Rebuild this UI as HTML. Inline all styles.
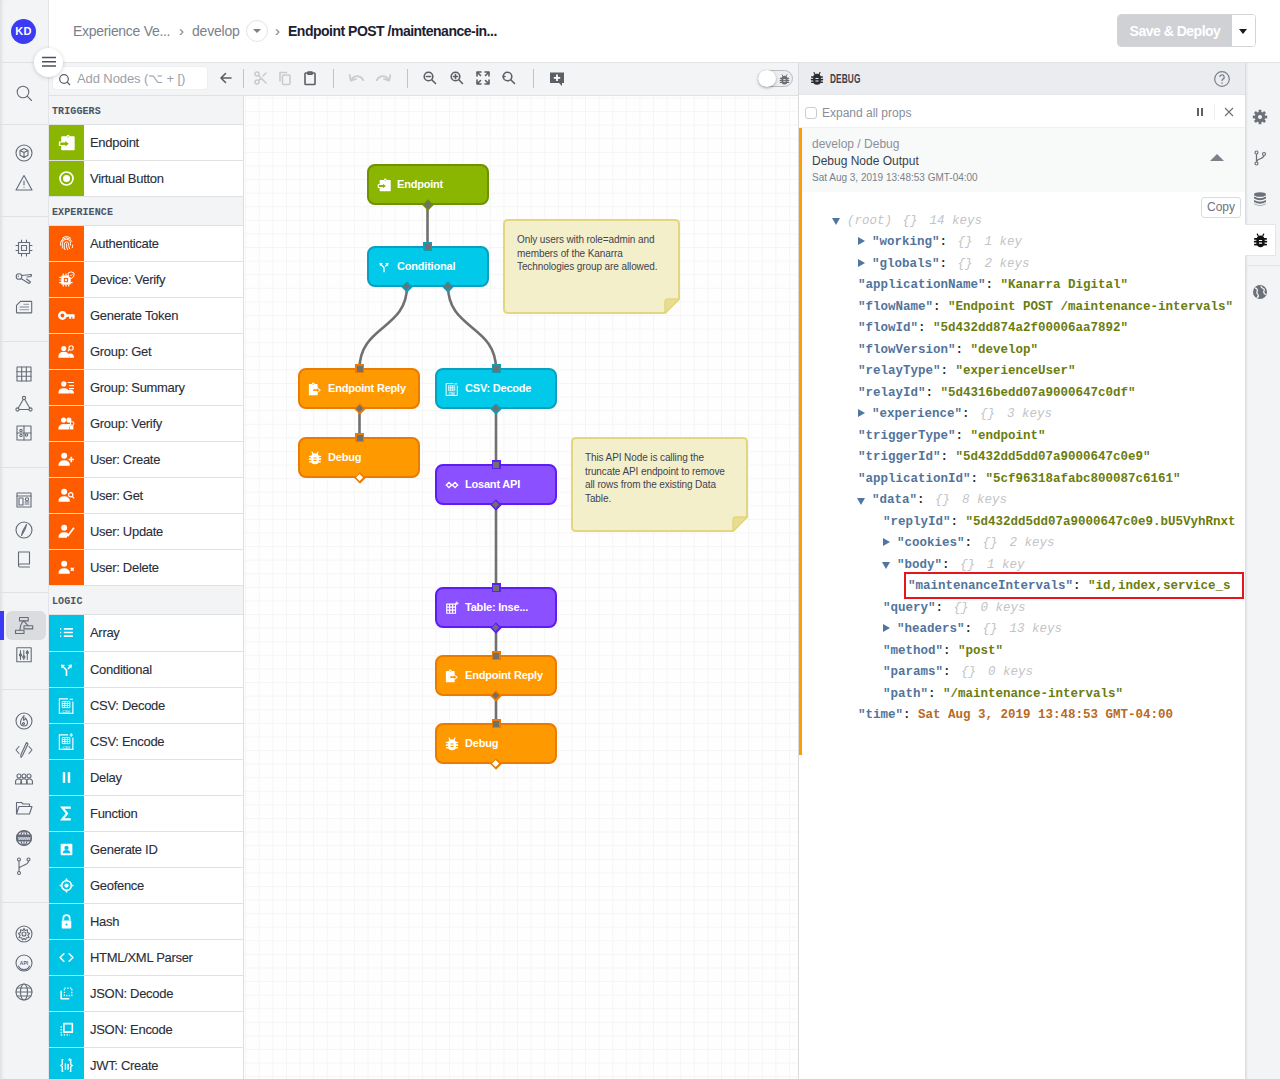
<!DOCTYPE html>
<html><head><meta charset="utf-8">
<style>
*{box-sizing:border-box;margin:0;padding:0}
html,body{width:1280px;height:1079px;overflow:hidden;background:#fff;font-family:"Liberation Sans",sans-serif;color:#2b2f3a}
.abs{position:absolute}
/* header */
#hdr{position:absolute;left:0;top:0;width:1280px;height:63px;background:#fff;border-bottom:1px solid #e1e3e6}
/* left sidebar */
#lsb{position:absolute;left:0;top:0;width:49px;height:1079px;background:#f3f4f6;border-right:1px solid #e3e5e8;box-shadow:inset 4px 0 4px -3px rgba(0,0,0,.12)}
.lsdiv{position:absolute;left:0;width:48px;height:1px;background:#e0e2e5}
.lsi{position:absolute;left:14px;width:20px;height:20px}
/* toolbar */
#tb{position:absolute;left:49px;top:63px;width:749px;height:33px;background:#f3f4f6;border-bottom:1px solid #dfe1e4}
/* palette */
#pal{position:absolute;left:49px;top:96px;width:195px;height:983px;background:#fff;border-right:1px solid #dcdee1;overflow:hidden}
.ph{height:29px;background:#f3f4f6;border-bottom:1px solid #dfe1e4;font-family:"Liberation Mono",monospace;font-weight:700;font-size:10px;color:#4c5363;padding:9.5px 0 0 3px;letter-spacing:0.1px}
.pi{height:36px;border-bottom:1px solid #dfe1e4;position:relative;background:#fff}
.pi .ic{position:absolute;left:0;top:0;width:35px;height:35px}
.pi .tx{position:absolute;left:41px;top:10px;font-size:13px;color:#2a2e3a;white-space:nowrap;letter-spacing:-0.3px;-webkit-text-stroke:0.1px #2a2e3a}
.g{background:#8ab500}.o{background:#ff5c00}.c{background:#00c4e6}
.pi svg{position:absolute;left:9px;top:9px;width:17px;height:17px}
/* canvas */
#cv{position:absolute;left:244px;top:96px;width:554px;height:983px;background-color:#fefefe;
background-image:linear-gradient(to right,#f5f5f5 1px,transparent 1px),linear-gradient(to bottom,#f5f5f5 1px,transparent 1px);
background-size:13.6px 13.6px;background-position:1.2px 1.5px;overflow:hidden}
/* debug panel */
#dbg{position:absolute;left:798px;top:63px;width:447px;height:1016px;background:#fff;border-left:1px solid #d9dbde}
#rsb{position:absolute;left:1245px;top:63px;width:35px;height:1016px;background:#f3f4f6;box-shadow:inset 3px 0 3px -2px rgba(0,0,0,.15)}
.node{position:absolute;width:122px;height:41px;border-radius:8px;border:2px solid;color:#fff;font-size:11px;font-weight:700}
.node .nt{position:absolute;left:28px;top:11.5px;white-space:nowrap}
.json{font-family:"Liberation Mono",monospace;font-size:12.5px;font-weight:700;white-space:pre;position:absolute;line-height:21.52px}
.k{color:#52749b}.s{color:#6a7d0e}.m{color:#c2c4c6;font-style:italic;font-weight:400}.t{color:#b86a1f}
</style></head><body>
<div id="hdr">
  
  <div class="abs" style="left:73px;top:23px;font-size:14px;color:#7a808c;letter-spacing:-0.3px;white-space:nowrap">Experience Ve...</div>
  <div class="abs" style="left:179px;top:22px;font-size:15px;color:#7a808c">&#8250;</div>
  <div class="abs" style="left:192px;top:23px;font-size:14px;color:#7a808c;letter-spacing:-0.2px">develop</div>
  <div class="abs" style="left:246px;top:20px;width:22px;height:22px;border-radius:50%;border:1px solid #e2e4e7;background:#fff"></div>
  <div class="abs" style="left:253px;top:29px;width:0;height:0;border-left:4px solid transparent;border-right:4px solid transparent;border-top:4px solid #7a808c"></div>
  <div class="abs" style="left:275px;top:22px;font-size:15px;color:#7a808c">&#8250;</div>
  <div class="abs" style="left:288px;top:23px;font-size:14px;font-weight:700;color:#1c2030;letter-spacing:-0.5px;white-space:nowrap">Endpoint POST /maintenance-in...</div>
  <div class="abs" style="left:1117px;top:14px;width:139px;height:33px;border-radius:4px;border:1px solid #d2d4d8;overflow:hidden">
    <div class="abs" style="left:0;top:0;width:114px;height:31px;background:#cfd1d5;color:#fff;font-size:14px;font-weight:700;line-height:33px;text-align:center;letter-spacing:-0.5px">Save &amp; Deploy</div>
    <div class="abs" style="left:114px;top:0;width:23px;height:31px;background:#fff"></div>
    <div class="abs" style="left:121px;top:14px;width:0;height:0;border-left:4.5px solid transparent;border-right:4.5px solid transparent;border-top:5px solid #1a1a1a"></div>
  </div>
</div>

<div id="lsb">
<div class="lsdiv" style="top:62px"></div>
<div class="lsdiv" style="top:124px"></div>
<div class="lsdiv" style="top:216px"></div>
<div class="lsdiv" style="top:341px"></div>
<div class="lsdiv" style="top:467px"></div>
<div class="lsdiv" style="top:592px"></div>
<div class="lsdiv" style="top:689px"></div>
<div class="lsdiv" style="top:902px"></div>
<div class="abs" style="left:5.5px;top:611px;width:40.5px;height:29px;border-radius:6px;background:#dadce0"></div>
<div class="abs" style="left:0;top:611px;width:4px;height:29px;background:#3b3bf5"></div>
<svg class="abs" style="left:13.5px;top:82.8px" width="20" height="20" viewBox="0 0 20 20"><circle cx="9" cy="9" r="5.8" stroke="#646a76" stroke-width="1.1" fill="none" stroke-linecap="round" stroke-linejoin="round"/><path d="M13.2 13.2 L17.5 17.5" stroke="#646a76" stroke-width="1.1" fill="none" stroke-linecap="round" stroke-linejoin="round"/></svg>
<svg class="abs" style="left:13.5px;top:142.8px" width="20" height="20" viewBox="0 0 20 20"><circle cx="10" cy="10" r="8" stroke="#646a76" stroke-width="1.1" fill="none" stroke-linecap="round" stroke-linejoin="round"/><path d="M10 5.5 L14 7.5 L14 12.2 L10 14.5 L6 12.2 L6 7.5 Z M6 7.5 L10 9.6 L14 7.5 M10 9.6 L10 14.5" stroke="#646a76" stroke-width="1.1" fill="none" stroke-linecap="round" stroke-linejoin="round"/></svg>
<svg class="abs" style="left:13.5px;top:172.8px" width="20" height="20" viewBox="0 0 20 20"><path d="M10 2.5 L18 17 L2 17 Z" stroke="#646a76" stroke-width="1.1" fill="none" stroke-linecap="round" stroke-linejoin="round"/><path d="M10 8 L10 12" stroke="#646a76" stroke-width="1.1" fill="none" stroke-linecap="round" stroke-linejoin="round"/><circle cx="10" cy="14.6" r="0.5" fill="#5f6573"/></svg>
<svg class="abs" style="left:13.5px;top:237.8px" width="20" height="20" viewBox="0 0 20 20"><rect x="4.5" y="4.5" width="11" height="11" stroke="#646a76" stroke-width="1.1" fill="none" stroke-linecap="round" stroke-linejoin="round"/><rect x="7.5" y="7.5" width="5" height="5" stroke="#646a76" stroke-width="1.1" fill="none" stroke-linecap="round" stroke-linejoin="round"/><path d="M7.5 2 V4.5 M12.5 2 V4.5 M7.5 15.5 V18 M12.5 15.5 V18 M2 7.5 H4.5 M2 12.5 H4.5 M15.5 7.5 H18 M15.5 12.5 H18" stroke="#646a76" stroke-width="1.1" fill="none" stroke-linecap="round" stroke-linejoin="round"/></svg>
<svg class="abs" style="left:13.5px;top:267.8px" width="20" height="20" viewBox="0 0 20 20"><circle cx="5" cy="8.5" r="2.8" stroke="#646a76" stroke-width="1.1" fill="none" stroke-linecap="round" stroke-linejoin="round"/><circle cx="4.3" cy="8.2" r="0.7" fill="#646a76"/><path d="M7.6 7.5 L17.5 6.5 L17 8.5 L13 9 M7 10.5 L15 15.5 L16.5 14 L12.5 11" stroke="#646a76" stroke-width="1.1" fill="none" stroke-linecap="round" stroke-linejoin="round"/></svg>
<svg class="abs" style="left:13.5px;top:296.8px" width="20" height="20" viewBox="0 0 20 20"><path d="M6.5 4.4 H17.2 Q17.7 4.4 17.7 4.9 V15.4 Q17.7 15.9 17.2 15.9 H3 Q2.5 15.9 2.5 15.4 V8.4 Z" stroke="#646a76" stroke-width="1.1" fill="none" stroke-linecap="round" stroke-linejoin="round"/><path d="M9.5 7.3 H15 M5.5 10 H15 M5.5 12.7 H15" stroke="#a5a9b1" stroke-width="1.3"/></svg>
<svg class="abs" style="left:13.5px;top:363.8px" width="20" height="20" viewBox="0 0 20 20"><rect x="3" y="3" width="14" height="14" stroke="#646a76" stroke-width="1.1" fill="none" stroke-linecap="round" stroke-linejoin="round"/><path d="M3 7.7 H17 M3 12.3 H17 M7.7 3 V17 M12.3 3 V17" stroke="#646a76" stroke-width="1.1" fill="none" stroke-linecap="round" stroke-linejoin="round"/></svg>
<svg class="abs" style="left:13.5px;top:393.8px" width="20" height="20" viewBox="0 0 20 20"><circle cx="10" cy="4" r="1.6" stroke="#646a76" stroke-width="1.1" fill="none" stroke-linecap="round" stroke-linejoin="round"/><circle cx="3.5" cy="15.5" r="1.6" stroke="#646a76" stroke-width="1.1" fill="none" stroke-linecap="round" stroke-linejoin="round"/><circle cx="16.5" cy="15.5" r="1.6" stroke="#646a76" stroke-width="1.1" fill="none" stroke-linecap="round" stroke-linejoin="round"/><path d="M9.2 5.5 L4.3 14 M10.8 5.5 L15.7 14 M5.2 15.5 H14.8" stroke="#646a76" stroke-width="1.1" fill="none" stroke-linecap="round" stroke-linejoin="round"/></svg>
<svg class="abs" style="left:13.5px;top:422.8px" width="20" height="20" viewBox="0 0 20 20"><rect x="3" y="3" width="14" height="14" stroke="#646a76" stroke-width="1.1" fill="none" stroke-linecap="round" stroke-linejoin="round"/><path d="M10 3 V17 M3 10 H17" stroke="#646a76" stroke-width="1.1" fill="none" stroke-linecap="round" stroke-linejoin="round"/><circle cx="7" cy="7.5" r="1.2" stroke="#646a76" stroke-width="1.1" fill="none" stroke-linecap="round" stroke-linejoin="round"/><circle cx="12.5" cy="12" r="1.2" stroke="#646a76" stroke-width="1.1" fill="none" stroke-linecap="round" stroke-linejoin="round"/><circle cx="7" cy="12.5" r="1.2" stroke="#646a76" stroke-width="1.1" fill="none" stroke-linecap="round" stroke-linejoin="round"/></svg>
<svg class="abs" style="left:13.5px;top:489.8px" width="20" height="20" viewBox="0 0 20 20"><rect x="3" y="3" width="14" height="14" stroke="#646a76" stroke-width="1.1" fill="none" stroke-linecap="round" stroke-linejoin="round"/><path d="M3 6 H17 M5 8 H9 V15 H5 Z M11 12 H15 M11 14 H15" stroke="#646a76" stroke-width="1.1" fill="none" stroke-linecap="round" stroke-linejoin="round"/><circle cx="13" cy="9.3" r="1.6" stroke="#646a76" stroke-width="1.1" fill="none" stroke-linecap="round" stroke-linejoin="round"/></svg>
<svg class="abs" style="left:13.5px;top:519.8px" width="20" height="20" viewBox="0 0 20 20"><circle cx="10" cy="10" r="8" stroke="#646a76" stroke-width="1.1" fill="none" stroke-linecap="round" stroke-linejoin="round"/><path d="M12.5 4.5 L9 10.5 L7.5 15.5 L11 9.5 Z" stroke="#646a76" stroke-width="1.1" fill="none" stroke-linecap="round" stroke-linejoin="round"/></svg>
<svg class="abs" style="left:13.5px;top:548.8px" width="20" height="20" viewBox="0 0 20 20"><path d="M4.5 3 H15.5 V15 H6 A1.5 1.5 0 0 0 6 18 H15.5 M4.5 3 V16.5" stroke="#646a76" stroke-width="1.1" fill="none" stroke-linecap="round" stroke-linejoin="round"/></svg>
<svg class="abs" style="left:13.5px;top:615.8px" width="20" height="20" viewBox="0 0 20 20"><rect x="5.5" y="1.5" width="8.7" height="3.4" stroke="#646a76" stroke-width="1.1" fill="none" stroke-linecap="round" stroke-linejoin="round"/><rect x="10" y="9.7" width="8.7" height="3.2" stroke="#646a76" stroke-width="1.1" fill="none" stroke-linecap="round" stroke-linejoin="round"/><rect x="1.5" y="14.2" width="8.5" height="3.3" stroke="#646a76" stroke-width="1.1" fill="none" stroke-linecap="round" stroke-linejoin="round"/><path d="M9.8 4.9 Q6 8 6 14.2 M9.8 4.9 L14 9.7" stroke="#646a76" stroke-width="1.1" fill="none" stroke-linecap="round" stroke-linejoin="round"/></svg>
<svg class="abs" style="left:13.5px;top:645.8px" width="20" height="20" viewBox="0 0 20 20"><rect x="2.8" y="1.7" width="14.4" height="14.1" stroke="#646a76" stroke-width="1.1" fill="none" stroke-linecap="round" stroke-linejoin="round"/><path d="M6.5 4.5 V13.5 M9.8 4.5 V13.5 M13.3 4.5 V13.5" stroke="#646a76" stroke-width="1.1" fill="none" stroke-linecap="round" stroke-linejoin="round"/><circle cx="6.5" cy="9" r="1.1" stroke="#646a76" stroke-width="1.1" fill="none" stroke-linecap="round" stroke-linejoin="round"/><circle cx="9.8" cy="11" r="1.1" stroke="#646a76" stroke-width="1.1" fill="none" stroke-linecap="round" stroke-linejoin="round"/><circle cx="13.3" cy="6.5" r="1.1" stroke="#646a76" stroke-width="1.1" fill="none" stroke-linecap="round" stroke-linejoin="round"/></svg>
<svg class="abs" style="left:13.5px;top:711.4px" width="20" height="20" viewBox="0 0 20 20"><circle cx="10" cy="10" r="8" stroke="#646a76" stroke-width="1.1" fill="none" stroke-linecap="round" stroke-linejoin="round"/><path d="M10 4.5 C8 7 6.5 9 6.5 11.5 A3.5 3.5 0 0 0 13.5 11.5 C13.5 9.5 12 8 11.5 7 C11 9 10 9.5 9.5 9 C9.5 7.5 10 6 10 4.5 Z" stroke="#646a76" stroke-width="1.1" fill="none" stroke-linecap="round" stroke-linejoin="round"/><circle cx="9.5" cy="12.5" r="1" stroke="#646a76" stroke-width="1.1" fill="none" stroke-linecap="round" stroke-linejoin="round"/></svg>
<svg class="abs" style="left:13.5px;top:740.4px" width="20" height="20" viewBox="0 0 20 20"><path d="M5 6.5 L2 10 L5 13.5 M15 6.5 L18 10 L15 13.5" stroke="#646a76" stroke-width="1.1" fill="none" stroke-linecap="round" stroke-linejoin="round"/><path d="M12.5 2.5 L14 4 L8.5 15.5 L7 17.5 L6.8 15 Z" stroke="#646a76" stroke-width="1.1" fill="none" stroke-linecap="round" stroke-linejoin="round"/></svg>
<svg class="abs" style="left:13.5px;top:769.4px" width="20" height="20" viewBox="0 0 20 20"><circle cx="5" cy="7" r="2" stroke="#646a76" stroke-width="1.1" fill="none" stroke-linecap="round" stroke-linejoin="round"/><circle cx="10" cy="7" r="2" stroke="#646a76" stroke-width="1.1" fill="none" stroke-linecap="round" stroke-linejoin="round"/><circle cx="15" cy="7" r="2" stroke="#646a76" stroke-width="1.1" fill="none" stroke-linecap="round" stroke-linejoin="round"/><path d="M1.5 15 V13 A3 3 0 0 1 7.5 13 V15 Z M6.8 15 V13 A3 3 0 0 1 13.2 13 V15 Z M12.5 15 V13 A3 3 0 0 1 18.5 13 V15 Z" stroke="#646a76" stroke-width="1.1" fill="none" stroke-linecap="round" stroke-linejoin="round"/></svg>
<svg class="abs" style="left:13.5px;top:798.4px" width="20" height="20" viewBox="0 0 20 20"><path d="M2.5 16 V4.5 H7.5 L9 6 H15.5 V8.5 M2.5 16 L5 8.5 H18 L15.5 16 Z" stroke="#646a76" stroke-width="1.1" fill="none" stroke-linecap="round" stroke-linejoin="round"/></svg>
<svg class="abs" style="left:13.5px;top:828.4px" width="20" height="20" viewBox="0 0 20 20"><circle cx="10" cy="10" r="7.3" stroke="#646a76" stroke-width="1.5" fill="none"/><ellipse cx="10" cy="10" rx="3.3" ry="7.3" stroke="#646a76" stroke-width="1.1" fill="none"/><path d="M10 2.7 V17.3" stroke="#646a76" stroke-width="1.1"/><rect x="2.6" y="6.6" width="14.8" height="6.8" fill="#646a76"/><text x="10" y="12.3" font-size="5.6" text-anchor="middle" fill="#e6e8eb" font-family="Liberation Sans" font-weight="700" letter-spacing="-0.3">www</text></svg>
<svg class="abs" style="left:13.5px;top:856.4px" width="20" height="20" viewBox="0 0 20 20"><circle cx="5" cy="3.5" r="1.5" stroke="#646a76" stroke-width="1.1" fill="none" stroke-linecap="round" stroke-linejoin="round"/><circle cx="5" cy="17" r="1.5" stroke="#646a76" stroke-width="1.1" fill="none" stroke-linecap="round" stroke-linejoin="round"/><circle cx="14.5" cy="3.5" r="1.5" stroke="#646a76" stroke-width="1.1" fill="none" stroke-linecap="round" stroke-linejoin="round"/><path d="M5 5 V15.5 M14.5 5 C14.5 10 5 9 5 13" stroke="#646a76" stroke-width="1.1" fill="none" stroke-linecap="round" stroke-linejoin="round"/></svg>
<svg class="abs" style="left:13.5px;top:924.4px" width="20" height="20" viewBox="0 0 20 20"><circle cx="10" cy="10" r="8" stroke="#646a76" stroke-width="1.1" fill="none" stroke-linecap="round" stroke-linejoin="round"/><circle cx="10" cy="10" r="2" stroke="#646a76" stroke-width="1.1" fill="none" stroke-linecap="round" stroke-linejoin="round"/><path d="M10 4.5 L11 6.5 L13.5 5.8 L13.3 8.3 L15.5 9.5 L13.8 11.3 L15 13.5 L12.5 13.8 L11.5 15.8 L10 14.3 L8.5 15.8 L7.5 13.8 L5 13.5 L6.2 11.3 L4.5 9.5 L6.7 8.3 L6.5 5.8 L9 6.5 Z" stroke="#646a76" stroke-width="1.1" fill="none" stroke-linecap="round" stroke-linejoin="round"/></svg>
<svg class="abs" style="left:13.5px;top:953.4px" width="20" height="20" viewBox="0 0 20 20"><circle cx="10" cy="10" r="8" stroke="#646a76" stroke-width="1.1" fill="none" stroke-linecap="round" stroke-linejoin="round"/><path d="M4.5 13 A6 6 0 0 0 15.5 13" stroke="#646a76" stroke-width="1.1" fill="none" stroke-linecap="round" stroke-linejoin="round"/><text x="10" y="11.8" font-size="5" text-anchor="middle" fill="#5f6573" font-family="Liberation Sans" font-weight="700">API</text></svg>
<svg class="abs" style="left:13.5px;top:982.4px" width="20" height="20" viewBox="0 0 20 20"><circle cx="10" cy="10" r="8" stroke="#646a76" stroke-width="1.1" fill="none" stroke-linecap="round" stroke-linejoin="round"/><ellipse cx="10" cy="10" rx="3.5" ry="8" stroke="#646a76" stroke-width="1.1" fill="none" stroke-linecap="round" stroke-linejoin="round"/><path d="M2 10 H18 M3 6 H17 M3 14 H17" stroke="#646a76" stroke-width="1.1" fill="none" stroke-linecap="round" stroke-linejoin="round"/></svg>
</div>
<div id="tb">
<div class="abs" style="left:3px;top:3px;width:156px;height:24px;background:#fff;border-radius:4px;border:1px solid #eceef0"></div>
<svg class="abs" style="left:8.0px;top:8.5px" width="16" height="16" viewBox="0 0 16 16"><circle cx="7" cy="7" r="4.3" stroke="#5b5f66" stroke-width="1.2" fill="none"/><path d="M10.2 10.2 L13 13" stroke="#5b5f66" stroke-width="1.2"/></svg>
<div class="abs" style="left:28px;top:8px;font-size:13px;color:#9ba1ab;white-space:nowrap;letter-spacing:-0.1px">Add Nodes (&#8997; + [)</div>
<svg class="abs" style="left:169.0px;top:7.0px" width="16" height="16" viewBox="0 0 16 16"><path d="M13 8 H3 M7.5 3.5 L3 8 L7.5 12.5" stroke="#5b5f66" stroke-width="1.6" fill="none" stroke-linecap="round" stroke-linejoin="round"/></svg>
<div class="abs" style="left:193.5px;top:6px;width:1.2px;height:19px;background:#c1c3c7"></div>
<div class="abs" style="left:283.5px;top:6px;width:1.2px;height:19px;background:#c1c3c7"></div>
<div class="abs" style="left:357.5px;top:6px;width:1.2px;height:19px;background:#c1c3c7"></div>
<div class="abs" style="left:483.5px;top:6px;width:1.2px;height:19px;background:#c1c3c7"></div>
<svg class="abs" style="left:204.0px;top:7.0px" width="16" height="16" viewBox="0 0 16 16"><circle cx="4" cy="4" r="2" stroke="#c9cbcf" stroke-width="1.6" fill="none" stroke-linecap="round" stroke-linejoin="round"/><circle cx="4" cy="12" r="2" stroke="#c9cbcf" stroke-width="1.6" fill="none" stroke-linecap="round" stroke-linejoin="round"/><path d="M5.5 5.5 L13 13 M5.5 10.5 L8 8 M10 6 L13 3" stroke="#c9cbcf" stroke-width="1.6" fill="none" stroke-linecap="round" stroke-linejoin="round"/></svg>
<svg class="abs" style="left:228.0px;top:7.0px" width="16" height="16" viewBox="0 0 16 16"><path d="M3 11 V2.5 H9.5" stroke="#c9cbcf" stroke-width="1.6" fill="none" stroke-linecap="round" stroke-linejoin="round"/><rect x="5.5" y="5" width="7.5" height="9.5" rx="1" stroke="#c9cbcf" stroke-width="1.6" fill="none" stroke-linecap="round" stroke-linejoin="round"/></svg>
<svg class="abs" style="left:253.0px;top:7.0px" width="16" height="16" viewBox="0 0 16 16"><rect x="3" y="3" width="10" height="11.5" rx="0.8" stroke="#5b5f66" stroke-width="1.6" fill="none" stroke-linecap="round" stroke-linejoin="round"/><path d="M6 2 H10 V4.2 H6 Z" stroke="#5b5f66" stroke-width="1.6" fill="none" stroke-linecap="round" stroke-linejoin="round"/></svg>
<svg class="abs" style="left:299.0px;top:7.0px" width="18" height="18" viewBox="0 0 16 16"><path d="M3.5 8 C6 4.5 11 4.5 13.5 9" stroke="#c9cbcf" stroke-width="1.6" fill="none" stroke-linecap="round" stroke-linejoin="round" stroke-width="2"/><path d="M1.5 4.5 L2.5 9.5 L7 8" stroke="#c9cbcf" stroke-width="1.6" fill="none" stroke-linecap="round" stroke-linejoin="round" stroke-width="2"/></svg>
<svg class="abs" style="left:325.0px;top:7.0px" width="18" height="18" viewBox="0 0 16 16"><path d="M12.5 8 C10 4.5 5 4.5 2.5 9" stroke="#c9cbcf" stroke-width="1.6" fill="none" stroke-linecap="round" stroke-linejoin="round" stroke-width="2"/><path d="M14.5 4.5 L13.5 9.5 L9 8" stroke="#c9cbcf" stroke-width="1.6" fill="none" stroke-linecap="round" stroke-linejoin="round" stroke-width="2"/></svg>
<svg class="abs" style="left:373.0px;top:7.0px" width="16" height="16" viewBox="0 0 16 16"><circle cx="6.5" cy="6.5" r="4.3" stroke="#5b5f66" stroke-width="1.6" fill="none" stroke-linecap="round" stroke-linejoin="round"/><path d="M9.8 9.8 L13.5 13.5 M4.5 6.5 H8.5" stroke="#5b5f66" stroke-width="1.6" fill="none" stroke-linecap="round" stroke-linejoin="round"/></svg>
<svg class="abs" style="left:400.0px;top:7.0px" width="16" height="16" viewBox="0 0 16 16"><circle cx="6.5" cy="6.5" r="4.3" stroke="#5b5f66" stroke-width="1.6" fill="none" stroke-linecap="round" stroke-linejoin="round"/><path d="M9.8 9.8 L13.5 13.5 M4.5 6.5 H8.5 M6.5 4.5 V8.5" stroke="#5b5f66" stroke-width="1.6" fill="none" stroke-linecap="round" stroke-linejoin="round"/></svg>
<svg class="abs" style="left:426.0px;top:7.0px" width="16" height="16" viewBox="0 0 16 16"><path d="M2 6 V2 H6 M2 2 L5.5 5.5 M14 6 V2 H10 M14 2 L10.5 5.5 M2 10 V14 H6 M2 14 L5.5 10.5 M14 10 V14 H10 M14 14 L10.5 10.5" stroke="#5b5f66" stroke-width="1.6" fill="none" stroke-linecap="round" stroke-linejoin="round"/></svg>
<svg class="abs" style="left:452.0px;top:7.0px" width="16" height="16" viewBox="0 0 16 16"><circle cx="6.5" cy="6.5" r="4.3" stroke="#5b5f66" stroke-width="1.6" fill="none" stroke-linecap="round" stroke-linejoin="round"/><path d="M9.8 9.8 L13.5 13.5 M2.2 6.5 H4" stroke="#5b5f66" stroke-width="1.6" fill="none" stroke-linecap="round" stroke-linejoin="round"/></svg>
<svg class="abs" style="left:500.0px;top:8.0px" width="16" height="16" viewBox="0 0 16 16"><path d="M1 1.5 H15 V12 H13 V15 L10 12 H1 Z" fill="#5b5f66"/><path d="M8 3.5 V10 M4.8 6.8 H11.2" stroke="#fff" stroke-width="1.8"/></svg>
<div class="abs" style="left:709px;top:7px;width:35px;height:17px;border-radius:9px;background:#eceef0;border:1.5px solid #b9bcc1"></div>
<div class="abs" style="left:709px;top:7px;width:18px;height:17px;border-radius:50%;background:#fff;box-shadow:0 1px 3px rgba(0,0,0,.35)"></div>
<svg class="abs" style="left:729.5px;top:10.5px" width="11" height="11" viewBox="0 0 16 16"><path d="M5.6 3.2 L4.6 1.2 M10.4 3.2 L11.4 1.2" stroke="#6b6f76" stroke-width="1.3" stroke-linecap="round"/><rect x="3.6" y="2.6" width="8.8" height="12.6" rx="4.4" fill="#6b6f76"/><path d="M2 6.3 H4 M12 6.3 H14 M1.8 9.3 H4 M12 9.3 H14.2 M2 12.3 H4 M12 12.3 H14" stroke="#6b6f76" stroke-width="1.9" stroke-linecap="round"/><path d="M6.3 8 H9.7 M6.3 10.8 H9.7" stroke="#eceef0" stroke-width="1.2"/></svg>
</div>
<div id="pal">
<div class="ph">TRIGGERS</div>
<div class="pi"><div class="ic g" style="height:100%"><svg viewBox="0 0 16 16"><path d="M3 3 Q3 2.2 3.8 2.2 H8 A1.5 1.5 0 0 1 11 2.2 H15 Q15.7 2.2 15.7 3 V14.5 Q15.7 15.2 15 15.2 H3.8 Q3 15.2 3 14.5 Z" fill="#fff"/><circle cx="9.5" cy="2.7" r="0.6" fill="#8ab500"/><path d="M0.8 7 H6 V4.8 L11.6 9.2 L6 13.6 V11.4 H0.8 Z" fill="#fff"/><path d="M2.1 8 H7 V6.7 L10 9.2 L7 11.7 V10.4 H2.1 Z" fill="#8ab500"/></svg></div><div class="tx">Endpoint</div></div>
<div class="pi"><div class="ic g" style="height:100%"><svg viewBox="0 0 16 16"><circle cx="8" cy="8" r="6.1" stroke="#fff" stroke-width="1.6" fill="none"/><circle cx="8" cy="8" r="3.3" fill="#fff"/></svg></div><div class="tx">Virtual Button</div></div>
<div class="ph">EXPERIENCE</div>
<div class="pi"><div class="ic o" style="height:100%"><svg viewBox="0 0 16 16"><g stroke="#fff" stroke-width="0.9" fill="none" stroke-linecap="round"><path d="M3 6 A5.5 5.5 0 0 1 13 6"/><path d="M2.3 9.5 A5.8 5.8 0 0 1 4 4.5"/><path d="M4.5 12.5 A6 6 0 0 1 4.2 8 A3.8 3.8 0 0 1 11.8 8 V9.5"/><path d="M6.5 13.8 A8 8 0 0 1 6 8.5 A2 2 0 0 1 10 8.5 A7 7 0 0 0 11 13"/><path d="M8 8.5 A9 9 0 0 0 9 13.8"/><path d="M13.8 9.5 A7 7 0 0 1 13.5 12"/><path d="M4.3 2.8 A6 6 0 0 1 11.7 2.8"/></g></svg></div><div class="tx">Authenticate</div></div>
<div class="pi"><div class="ic o" style="height:100%"><svg viewBox="0 0 16 16"><rect x="3" y="4" width="9" height="9" rx="1.5" fill="#fff"/><rect x="5.5" y="6.5" width="4" height="4" fill="#ff5c00"/><rect x="6.5" y="7.5" width="2" height="2" fill="#fff"/><path d="M5 2.3 V4 M7.5 2.3 V4 M5 13 V14.7 M7.5 13 V14.7 M10 13 V14.7 M1.3 6 H3 M1.3 8.5 H3 M1.3 11 H3 M12 11 H13.7" stroke="#fff" stroke-width="1.1"/><path d="M12.3 0.8 L15 1.8 V4 Q15 6 12.3 7 Q9.6 6 9.6 4 V1.8 Z" fill="#ff5c00" stroke="#fff" stroke-width="0.9"/><path d="M11.2 3.8 L12.1 4.7 L13.6 3" stroke="#fff" stroke-width="0.8" fill="none"/></svg></div><div class="tx">Device: Verify</div></div>
<div class="pi"><div class="ic o" style="height:100%"><svg viewBox="0 0 16 16"><circle cx="4.2" cy="8" r="3" stroke="#fff" stroke-width="2.3" fill="none"/><path d="M7 8 H15.5" stroke="#fff" stroke-width="2.4"/><path d="M11.5 8 V11 M14.5 8 V11" stroke="#fff" stroke-width="2"/></svg></div><div class="tx">Generate Token</div></div>
<div class="pi"><div class="ic o" style="height:100%"><svg viewBox="0 0 16 16"><circle cx="5.4" cy="5.2" r="2.4" fill="#fff"/><path d="M0.3 13.8 Q0.3 8.3 5.5 8.3 Q10.7 8.3 10.7 13.8 Z" fill="#fff"/><path d="M9.2 13.8 H15 Q15 9.9 11.5 9.9 Q10 9.9 9.3 10.6 Q10.8 11.8 10.9 13.8 Z" fill="#fff"/><circle cx="12.3" cy="4.6" r="2" stroke="#fff" stroke-width="1.1" fill="none"/><path d="M10.9 6 L9.3 7.6" stroke="#fff" stroke-width="1.1"/></svg></div><div class="tx">Group: Get</div></div>
<div class="pi"><div class="ic o" style="height:100%"><svg viewBox="0 0 16 16"><circle cx="5.4" cy="4.6" r="2.4" fill="#fff"/><path d="M0.3 13.6 Q0.3 8.6 5.5 8.6 Q10.7 8.6 10.7 13.6 Z" fill="#fff"/><path d="M9.2 13.6 H15 Q15 10.2 11.5 10.2 Q10 10.2 9.3 10.9 Q10.8 12 10.9 13.6 Z" fill="#fff"/><path d="M9.5 3.3 H15 M10.5 6.2 H15 M10.5 9 H15" stroke="#fff" stroke-width="1.1"/><path d="M8.2 3.3 H8.8" stroke="#fff" stroke-width="1.1"/></svg></div><div class="tx">Group: Summary</div></div>
<div class="pi"><div class="ic o" style="height:100%"><svg viewBox="0 0 16 16"><circle cx="5.2" cy="4.8" r="2.4" fill="#fff"/><circle cx="10.3" cy="4.8" r="2.4" fill="#fff"/><path d="M0.3 13.6 Q0.3 8.4 5.3 8.4 Q10.3 8.4 10.3 13.6 Z M6.5 8.8 Q8 8.3 10.5 8.4 Q11.5 8.5 12.2 9 L10.5 11.5 V13.6 H10.8 Z" fill="#fff"/><circle cx="13.3" cy="8" r="1.7" stroke="#fff" stroke-width="1" fill="none"/><path d="M11 10 H14.5 V13.6 H11 Z" fill="#fff"/></svg></div><div class="tx">Group: Verify</div></div>
<div class="pi"><div class="ic o" style="height:100%"><svg viewBox="0 0 16 16"><circle cx="5.8" cy="4.4" r="2.8" fill="#fff"/><path d="M0.4 13.8 Q0.4 8.6 5.8 8.6 Q11.2 8.6 11.2 13.8 Z" fill="#fff"/><path d="M12.5 5.5 V10.5 M10 8 H15" stroke="#fff" stroke-width="1.6"/></svg></div><div class="tx">User: Create</div></div>
<div class="pi"><div class="ic o" style="height:100%"><svg viewBox="0 0 16 16"><circle cx="5.8" cy="4.4" r="2.8" fill="#fff"/><path d="M0.4 13.8 Q0.4 8.6 5.8 8.6 Q11.2 8.6 11.2 13.8 Z" fill="#fff"/><circle cx="12" cy="7.3" r="2" stroke="#fff" stroke-width="1.1" fill="none"/><path d="M13.4 8.8 L15.2 10.7" stroke="#fff" stroke-width="1.2"/></svg></div><div class="tx">User: Get</div></div>
<div class="pi"><div class="ic o" style="height:100%"><svg viewBox="0 0 16 16"><circle cx="5.8" cy="4.4" r="2.8" fill="#fff"/><path d="M0.4 13.8 Q0.4 8.6 5.8 8.6 Q8.5 8.6 9.8 9.8 L8.2 13.8 Z" fill="#fff"/><path d="M9 12.5 L15 4.5" stroke="#fff" stroke-width="1.6"/></svg></div><div class="tx">User: Update</div></div>
<div class="pi"><div class="ic o" style="height:100%"><svg viewBox="0 0 16 16"><circle cx="5.8" cy="4.4" r="2.8" fill="#fff"/><path d="M0.4 13.8 Q0.4 8.6 5.8 8.6 Q11.2 8.6 11.2 13.8 Z" fill="#fff"/><path d="M12 8.3 L14.8 11.1 M14.8 8.3 L12 11.1" stroke="#fff" stroke-width="1.3"/></svg></div><div class="tx">User: Delete</div></div>
<div class="ph">LOGIC</div>
<div class="pi" style="height:37px"><div class="ic c" style="height:100%"><svg viewBox="0 0 16 16"><path d="M5.5 4.5 H14 M5.5 8 H14 M5.5 11.5 H14" stroke="#fff" stroke-width="1.6"/><path d="M2 4.5 H3 M2 8 H3 M2 11.5 H3" stroke="#fff" stroke-width="1.6"/></svg></div><div class="tx">Array</div></div>
<div class="pi"><div class="ic c" style="height:100%"><svg viewBox="0 0 16 16"><path d="M8 14 V8.6 L4.6 5.2" stroke="#fff" stroke-width="1.5" fill="none"/><path d="M9.4 7.4 L11.6 5.2" stroke="#fff" stroke-width="1.5" fill="none"/><path d="M2.8 3.2 L6.6 3.8 L3.4 7 Z M13.2 3.2 L9.4 3.8 L12.6 7 Z" fill="#fff"/></svg></div><div class="tx">Conditional</div></div>
<div class="pi"><div class="ic c" style="height:100%"><svg viewBox="0 0 16 16"><path d="M9.5 1.8 H1.3 V15.4 H14 V4.2" stroke="#fff" stroke-width="1.1" fill="none"/><path d="M4 4.2 H11.2 V10 H4 Z M4 6.1 H11.2 M4 8 H11.2 M6.4 4.2 V10 M8.8 4.2 V10" stroke="#fff" stroke-width="0.8" fill="none"/><text x="7.6" y="14.6" font-size="3.6" text-anchor="middle" fill="#fff" font-family="Liberation Sans">CSV</text><path d="M11 2.2 H14" stroke="#fff" stroke-width="1.1"/></svg></div><div class="tx">CSV: Decode</div></div>
<div class="pi"><div class="ic c" style="height:100%"><svg viewBox="0 0 16 16"><path d="M9.5 1.8 H1.3 V15.4 H14 V4.2" stroke="#fff" stroke-width="1.1" fill="none"/><path d="M4 4.2 H11.2 V10 H4 Z M4 6.1 H11.2 M4 8 H11.2 M6.4 4.2 V10 M8.8 4.2 V10" stroke="#fff" stroke-width="0.8" fill="none"/><text x="7.6" y="14.6" font-size="3.6" text-anchor="middle" fill="#fff" font-family="Liberation Sans">CSV</text><path d="M12.5 0.3 V3.5 M10.9 1.9 H14.1" stroke="#fff" stroke-width="1.1"/></svg></div><div class="tx">CSV: Encode</div></div>
<div class="pi"><div class="ic c" style="height:100%"><svg viewBox="0 0 16 16"><rect x="4.5" y="3" width="2.3" height="10" fill="#fff"/><rect x="9.2" y="3" width="2.3" height="10" fill="#fff"/></svg></div><div class="tx">Delay</div></div>
<div class="pi"><div class="ic c" style="height:100%"><svg viewBox="0 0 16 16"><path d="M12 2.5 H4 L8.5 8 L4 13.5 H12" stroke="#fff" stroke-width="2" fill="none"/></svg></div><div class="tx">Function</div></div>
<div class="pi"><div class="ic c" style="height:100%"><svg viewBox="0 0 16 16"><rect x="2.5" y="2.5" width="11" height="11" rx="1" fill="#fff"/><circle cx="8" cy="6.5" r="2" fill="#00c4e6"/><path d="M4.5 11.5 A3.5 3 0 0 1 11.5 11.5 Z" fill="#00c4e6"/></svg></div><div class="tx">Generate ID</div></div>
<div class="pi"><div class="ic c" style="height:100%"><svg viewBox="0 0 16 16"><circle cx="8" cy="8" r="4.5" stroke="#fff" stroke-width="1.5" fill="none" stroke-linecap="round" stroke-linejoin="round" stroke-width="1.6"/><circle cx="8" cy="8" r="2" fill="#fff"/><path d="M8 1.5 V3.5 M8 12.5 V14.5 M1.5 8 H3.5 M12.5 8 H14.5" stroke="#fff" stroke-width="1.6"/></svg></div><div class="tx">Geofence</div></div>
<div class="pi"><div class="ic c" style="height:100%"><svg viewBox="0 0 16 16"><path d="M5 7 V5 A3 3 0 0 1 11 5 V7" stroke="#fff" stroke-width="1.6" fill="none"/><rect x="3.5" y="7" width="9" height="7.5" rx="0.8" fill="#fff"/><circle cx="8" cy="10.8" r="1" fill="#00c4e6"/></svg></div><div class="tx">Hash</div></div>
<div class="pi"><div class="ic c" style="height:100%"><svg viewBox="0 0 16 16"><path d="M5.5 4.5 L2 8 L5.5 11.5 M10.5 4.5 L14 8 L10.5 11.5" stroke="#fff" stroke-width="1.5" fill="none" stroke-linecap="round" stroke-linejoin="round"/></svg></div><div class="tx">HTML/XML Parser</div></div>
<div class="pi"><div class="ic c" style="height:100%"><svg viewBox="0 0 16 16"><path d="M3 6 V13 H10" stroke="#fff" stroke-width="1.5" fill="none" stroke-linecap="round" stroke-linejoin="round"/><path d="M6 3 H13 V10 H6 Z" stroke="#fff" stroke-width="1.2" stroke-dasharray="1.3 1.3" fill="none"/></svg></div><div class="tx">JSON: Decode</div></div>
<div class="pi"><div class="ic c" style="height:100%"><svg viewBox="0 0 16 16"><rect x="5.5" y="2.5" width="8" height="8" stroke="#fff" stroke-width="1.5" fill="none" stroke-linecap="round" stroke-linejoin="round" stroke-width="1.6"/><path d="M3 5 V13 H11" stroke="#fff" stroke-width="1.2" stroke-dasharray="1.3 1.3" fill="none"/></svg></div><div class="tx">JSON: Encode</div></div>
<div class="pi"><div class="ic c" style="height:100%"><svg viewBox="0 0 16 16"><path d="M5 2.5 H4 V7 L2.5 8 L4 9 V13.5 H5 M11 2.5 H12 V7 L13.5 8 L12 9 V13.5 H11" stroke="#fff" stroke-width="1.2" fill="none"/><path d="M7 6 V12 M9.5 6.5 V12" stroke="#fff" stroke-width="1.3"/><path d="M11 1 V4 M9.5 2.5 H12.5" stroke="#fff" stroke-width="1"/></svg></div><div class="tx">JWT: Create</div></div>
</div>
<div id="cv">
<svg class="abs" style="left:259px;top:123px" width="177" height="95" viewBox="0 0 177 95"><path d="M1 5 Q1 1 5 1 H172 Q176 1 176 5 V80 L162 94 H5 Q1 94 1 90 Z" fill="#f4efcb" stroke="#e2d77e" stroke-width="2"/><path d="M176 80 H165 Q162 80 162 83 V94 Z" fill="#e8dd90" stroke="#e2d77e" stroke-width="1.5"/></svg><div class="abs" style="left:273px;top:137px;font-size:10px;line-height:13.6px;color:#3f4350;white-space:nowrap;letter-spacing:-0.1px">Only users with role=admin and<br>members of the Kanarra<br>Technologies group are allowed.</div>
<svg class="abs" style="left:327px;top:341px" width="177" height="95" viewBox="0 0 177 95"><path d="M1 5 Q1 1 5 1 H172 Q176 1 176 5 V80 L162 94 H5 Q1 94 1 90 Z" fill="#f4efcb" stroke="#e2d77e" stroke-width="2"/><path d="M176 80 H165 Q162 80 162 83 V94 Z" fill="#e8dd90" stroke="#e2d77e" stroke-width="1.5"/></svg><div class="abs" style="left:341px;top:355px;font-size:10px;line-height:13.6px;color:#3f4350;white-space:nowrap;letter-spacing:-0.1px">This API Node is calling the<br>truncate API endpoint to remove<br>all rows from the existing Data<br>Table.</div>
<svg class="abs" style="left:0;top:0" width="554" height="983" viewBox="244 96 554 983"><path d="M427.5 205 L427.5 246" stroke="#707070" stroke-width="2.6" fill="none"/><path d="M407 286 C407 330 359.5 325 359.5 369" stroke="#707070" stroke-width="2.6" fill="none"/><path d="M448 286 C448 330 496 325 496 369" stroke="#707070" stroke-width="2.6" fill="none"/><path d="M359.5 409 L359.5 437" stroke="#707070" stroke-width="2.6" fill="none"/><path d="M496 409 L496 464" stroke="#707070" stroke-width="2.6" fill="none"/><path d="M496 504 L496 587" stroke="#707070" stroke-width="2.6" fill="none"/><path d="M496 627 L496 655" stroke="#707070" stroke-width="2.6" fill="none"/><path d="M496 695 L496 723" stroke="#707070" stroke-width="2.6" fill="none"/></svg>
<div class="node" style="left:123px;top:68px;background:#8ab500;border-color:#6d9100"><svg class="abs" style="left:7.5px;top:11.5px" width="14" height="14" viewBox="0 0 16 16"><path d="M3 3 Q3 2.2 3.8 2.2 H8 A1.5 1.5 0 0 1 11 2.2 H15 Q15.7 2.2 15.7 3 V14.5 Q15.7 15.2 15 15.2 H3.8 Q3 15.2 3 14.5 Z" fill="#fff"/><circle cx="9.5" cy="2.7" r="0.6" fill="#8ab500"/><path d="M0.8 7 H6 V4.8 L11.6 9.2 L6 13.6 V11.4 H0.8 Z" fill="#fff"/><path d="M2.1 8 H7 V6.7 L10 9.2 L7 11.7 V10.4 H2.1 Z" fill="#8ab500"/></svg><div class="nt" style="letter-spacing:-0.2px">Endpoint</div></div>
<div class="abs" style="left:179.5px;top:105px;width:8px;height:8px;transform:rotate(45deg);background:#6d9100"></div>
<div class="abs" style="left:180.9px;top:106.4px;width:5.2px;height:5.2px;transform:rotate(45deg);background:#707070"></div>
<div class="node" style="left:123px;top:150px;background:#00c9ea;border-color:#0a9fbf"><svg class="abs" style="left:7.5px;top:11.5px" width="14" height="14" viewBox="0 0 16 16"><path d="M8 14 V8.6 L4.6 5.2" stroke="#fff" stroke-width="1.5" fill="none"/><path d="M9.4 7.4 L11.6 5.2" stroke="#fff" stroke-width="1.5" fill="none"/><path d="M2.8 3.2 L6.6 3.8 L3.4 7 Z M13.2 3.2 L9.4 3.8 L12.6 7 Z" fill="#fff"/></svg><div class="nt" style="letter-spacing:-0.2px">Conditional</div></div>
<div class="abs" style="left:159px;top:187px;width:8px;height:8px;transform:rotate(45deg);background:#0a9fbf"></div>
<div class="abs" style="left:160.4px;top:188.4px;width:5.2px;height:5.2px;transform:rotate(45deg);background:#707070"></div>
<div class="abs" style="left:200px;top:187px;width:8px;height:8px;transform:rotate(45deg);background:#0a9fbf"></div>
<div class="abs" style="left:201.4px;top:188.4px;width:5.2px;height:5.2px;transform:rotate(45deg);background:#707070"></div>
<div class="abs" style="left:179.0px;top:146.0px;width:9px;height:9px;background:#0a9fbf"></div>
<div class="abs" style="left:180.5px;top:147.5px;width:6px;height:6px;background:#707070"></div>
<div class="node" style="left:54px;top:272px;background:#ff9900;border-color:#e87b00"><svg class="abs" style="left:7.5px;top:11.5px" width="14" height="14" viewBox="0 0 16 16"><path d="M1 3 Q1 2.2 1.8 2.2 H4.5 A1.5 1.5 0 0 1 7.5 2.2 H10.2 Q11 2.2 11 3 V14.5 Q11 15.2 10.2 15.2 H1.8 Q1 15.2 1 14.5 Z" fill="#fff"/><circle cx="6" cy="2.7" r="0.6" fill="#ff9900"/><path d="M5 7.1 H9.5 V5.2 L14.8 9.3 L9.5 13.4 V11.5 H5 Z" fill="#fff"/><path d="M6 8.2 H10.4 V7.2 L13.1 9.3 L10.4 11.4 V10.4 H6 Z" fill="#ff9900"/></svg><div class="nt" style="letter-spacing:-0.2px">Endpoint Reply</div></div>
<div class="abs" style="left:111.5px;top:309px;width:8px;height:8px;transform:rotate(45deg);background:#e87b00"></div>
<div class="abs" style="left:112.9px;top:310.4px;width:5.2px;height:5.2px;transform:rotate(45deg);background:#707070"></div>
<div class="abs" style="left:111.0px;top:268.0px;width:9px;height:9px;background:#e87b00"></div>
<div class="abs" style="left:112.5px;top:269.5px;width:6px;height:6px;background:#707070"></div>
<div class="node" style="left:54px;top:341px;background:#ff9900;border-color:#e87b00"><svg class="abs" style="left:7.5px;top:11.5px" width="14" height="14" viewBox="0 0 16 16"><path d="M5.6 3.2 L4.6 1.2 M10.4 3.2 L11.4 1.2" stroke="#fff" stroke-width="1.3" stroke-linecap="round"/><rect x="3.6" y="2.6" width="8.8" height="12.6" rx="4.4" fill="#fff"/><path d="M2 6.3 H4 M12 6.3 H14 M1.8 9.3 H4 M12 9.3 H14.2 M2 12.3 H4 M12 12.3 H14" stroke="#fff" stroke-width="1.9" stroke-linecap="round"/><path d="M6.3 8 H9.7 M6.3 10.8 H9.7" stroke="#ff9900" stroke-width="1.2"/></svg><div class="nt" style="letter-spacing:-0.2px">Debug</div></div>
<div class="abs" style="left:111.5px;top:378px;width:8px;height:8px;transform:rotate(45deg);background:#e87b00"></div>
<div class="abs" style="left:112.9px;top:379.4px;width:5.2px;height:5.2px;transform:rotate(45deg);background:#fff"></div>
<div class="abs" style="left:111.0px;top:337.0px;width:9px;height:9px;background:#e87b00"></div>
<div class="abs" style="left:112.5px;top:338.5px;width:6px;height:6px;background:#707070"></div>
<div class="node" style="left:191px;top:272px;background:#00c9ea;border-color:#0a9fbf"><svg class="abs" style="left:7.5px;top:11.5px" width="14" height="14" viewBox="0 0 16 16"><path d="M9.5 1.8 H1.3 V15.4 H14 V4.2" stroke="#fff" stroke-width="1.1" fill="none"/><path d="M4 4.2 H11.2 V10 H4 Z M4 6.1 H11.2 M4 8 H11.2 M6.4 4.2 V10 M8.8 4.2 V10" stroke="#fff" stroke-width="0.8" fill="none"/><text x="7.6" y="14.6" font-size="3.6" text-anchor="middle" fill="#fff" font-family="Liberation Sans">CSV</text><path d="M11 2.2 H14" stroke="#fff" stroke-width="1.1"/></svg><div class="nt" style="letter-spacing:-0.2px">CSV: Decode</div></div>
<div class="abs" style="left:248px;top:309px;width:8px;height:8px;transform:rotate(45deg);background:#0a9fbf"></div>
<div class="abs" style="left:249.4px;top:310.4px;width:5.2px;height:5.2px;transform:rotate(45deg);background:#707070"></div>
<div class="abs" style="left:247.5px;top:268.0px;width:9px;height:9px;background:#0a9fbf"></div>
<div class="abs" style="left:249px;top:269.5px;width:6px;height:6px;background:#707070"></div>
<div class="node" style="left:191px;top:368px;background:#8b50ff;border-color:#5d1ef5"><svg class="abs" style="left:7.5px;top:11.5px" width="14" height="14" viewBox="0 0 16 16"><path d="M1.5 8 L4.5 5 L7.5 8 L4.5 11 Z M8.5 8 L11.5 5 L14.5 8 L11.5 11 Z" stroke="#fff" stroke-width="1.6" fill="none"/></svg><div class="nt" style="letter-spacing:-0.2px">Losant API</div></div>
<div class="abs" style="left:248px;top:405px;width:8px;height:8px;transform:rotate(45deg);background:#5d1ef5"></div>
<div class="abs" style="left:249.4px;top:406.4px;width:5.2px;height:5.2px;transform:rotate(45deg);background:#707070"></div>
<div class="abs" style="left:247.5px;top:364.0px;width:9px;height:9px;background:#5d1ef5"></div>
<div class="abs" style="left:249px;top:365.5px;width:6px;height:6px;background:#707070"></div>
<div class="node" style="left:191px;top:491px;background:#8b50ff;border-color:#5d1ef5"><svg class="abs" style="left:7.5px;top:11.5px" width="14" height="14" viewBox="0 0 16 16"><path d="M2 3.5 H12 V14 H2 Z M2 7 H12 M2 10.5 H12 M5.3 3.5 V14 M8.7 3.5 V14" stroke="#fff" stroke-width="1.3" fill="none"/><path d="M13.5 0.5 V4.5 M11.5 2.5 H15.5" stroke="#fff" stroke-width="1.2"/></svg><div class="nt" style="letter-spacing:-0.2px">Table: Inse...</div></div>
<div class="abs" style="left:248px;top:528px;width:8px;height:8px;transform:rotate(45deg);background:#5d1ef5"></div>
<div class="abs" style="left:249.4px;top:529.4px;width:5.2px;height:5.2px;transform:rotate(45deg);background:#707070"></div>
<div class="abs" style="left:247.5px;top:487.0px;width:9px;height:9px;background:#5d1ef5"></div>
<div class="abs" style="left:249px;top:488.5px;width:6px;height:6px;background:#707070"></div>
<div class="node" style="left:191px;top:559px;background:#ff9900;border-color:#e87b00"><svg class="abs" style="left:7.5px;top:11.5px" width="14" height="14" viewBox="0 0 16 16"><path d="M1 3 Q1 2.2 1.8 2.2 H4.5 A1.5 1.5 0 0 1 7.5 2.2 H10.2 Q11 2.2 11 3 V14.5 Q11 15.2 10.2 15.2 H1.8 Q1 15.2 1 14.5 Z" fill="#fff"/><circle cx="6" cy="2.7" r="0.6" fill="#ff9900"/><path d="M5 7.1 H9.5 V5.2 L14.8 9.3 L9.5 13.4 V11.5 H5 Z" fill="#fff"/><path d="M6 8.2 H10.4 V7.2 L13.1 9.3 L10.4 11.4 V10.4 H6 Z" fill="#ff9900"/></svg><div class="nt" style="letter-spacing:-0.2px">Endpoint Reply</div></div>
<div class="abs" style="left:248px;top:596px;width:8px;height:8px;transform:rotate(45deg);background:#e87b00"></div>
<div class="abs" style="left:249.4px;top:597.4px;width:5.2px;height:5.2px;transform:rotate(45deg);background:#707070"></div>
<div class="abs" style="left:247.5px;top:555.0px;width:9px;height:9px;background:#e87b00"></div>
<div class="abs" style="left:249px;top:556.5px;width:6px;height:6px;background:#707070"></div>
<div class="node" style="left:191px;top:627px;background:#ff9900;border-color:#e87b00"><svg class="abs" style="left:7.5px;top:11.5px" width="14" height="14" viewBox="0 0 16 16"><path d="M5.6 3.2 L4.6 1.2 M10.4 3.2 L11.4 1.2" stroke="#fff" stroke-width="1.3" stroke-linecap="round"/><rect x="3.6" y="2.6" width="8.8" height="12.6" rx="4.4" fill="#fff"/><path d="M2 6.3 H4 M12 6.3 H14 M1.8 9.3 H4 M12 9.3 H14.2 M2 12.3 H4 M12 12.3 H14" stroke="#fff" stroke-width="1.9" stroke-linecap="round"/><path d="M6.3 8 H9.7 M6.3 10.8 H9.7" stroke="#ff9900" stroke-width="1.2"/></svg><div class="nt" style="letter-spacing:-0.2px">Debug</div></div>
<div class="abs" style="left:248px;top:664px;width:8px;height:8px;transform:rotate(45deg);background:#e87b00"></div>
<div class="abs" style="left:249.4px;top:665.4px;width:5.2px;height:5.2px;transform:rotate(45deg);background:#fff"></div>
<div class="abs" style="left:247.5px;top:623.0px;width:9px;height:9px;background:#e87b00"></div>
<div class="abs" style="left:249px;top:624.5px;width:6px;height:6px;background:#707070"></div>
</div>
<div id="dbg">
<div class="abs" style="left:0px;top:0px;width:446px;height:32px;background:#ebecef;border-bottom:1px solid #e3e5e8"></div>
<svg class="abs" style="left:11px;top:8px" width="14" height="15" viewBox="0 0 16 16"><path d="M5.6 3.2 L4.6 1.2 M10.4 3.2 L11.4 1.2" stroke="#2a2d33" stroke-width="1.3" stroke-linecap="round"/><rect x="3.6" y="2.6" width="8.8" height="12.6" rx="4.4" fill="#2a2d33"/><path d="M2 6.3 H4 M12 6.3 H14 M1.8 9.3 H4 M12 9.3 H14.2 M2 12.3 H4 M12 12.3 H14" stroke="#2a2d33" stroke-width="1.9" stroke-linecap="round"/><path d="M6.3 8 H9.7 M6.3 10.8 H9.7" stroke="#ebecef" stroke-width="1.2"/></svg>
<div class="abs" style="left:31px;top:9px;font-size:12.5px;font-weight:700;color:#3b404c;transform:scaleX(0.66);transform-origin:0 0;letter-spacing:0.2px;line-height:14px">DEBUG</div>
<svg class="abs" style="left:414px;top:7px" width="18" height="18" viewBox="0 0 18 18"><circle cx="9" cy="9" r="7.3" stroke="#7a808c" stroke-width="1.2" fill="none"/><path d="M6.8 7 A2.2 2.2 0 1 1 9.8 9.2 C9.2 9.5 9 10 9 11" stroke="#7a808c" stroke-width="1.3" fill="none"/><circle cx="9" cy="13" r="0.8" fill="#7a808c"/></svg>
<div class="abs" style="left:6px;top:44px;width:12px;height:12px;border:1px solid #c9ccd1;border-radius:3px;background:#fff"></div>
<div class="abs" style="left:23px;top:43px;font-size:12px;color:#888e98;white-space:nowrap">Expand all props</div>
<div class="abs" style="left:398px;top:45px;width:2px;height:8px;background:#5a5f6b"></div>
<div class="abs" style="left:402px;top:45px;width:2px;height:8px;background:#5a5f6b"></div>
<div class="abs" style="left:415px;top:41px;width:1px;height:16px;background:#eceef0"></div>
<svg class="abs" style="left:425px;top:44px" width="10" height="10" viewBox="0 0 10 10"><path d="M1 1 L9 9 M9 1 L1 9" stroke="#6a707c" stroke-width="1.1"/></svg>
<div class="abs" style="left:0px;top:64px;width:446px;height:1px;background:#f0f1f3"></div>
<div class="abs" style="left:0px;top:65px;width:446px;height:64px;background:#f8f9f9"></div>
<div class="abs" style="left:0px;top:65px;width:3px;height:627px;background:#ff9c00"></div>
<div class="abs" style="left:13px;top:74px;font-size:12px;color:#8a909a;white-space:nowrap">develop / Debug</div>
<div class="abs" style="left:13px;top:90.5px;font-size:12px;color:#3a3f4c;white-space:nowrap">Debug Node Output</div>
<div class="abs" style="left:13px;top:108.5px;font-size:10px;color:#7b818b;white-space:nowrap;letter-spacing:0px">Sat Aug 3, 2019 13:48:53 GMT-04:00</div>
<div class="abs" style="left:411px;top:91px;width:0;height:0;border-left:7px solid transparent;border-right:7px solid transparent;border-bottom:7.5px solid #7b818b"></div>
<div class="abs" style="left:402px;top:134px;width:40px;height:21px;border:1px solid #d9dbdf;border-radius:3px;background:#fff;font-size:12px;color:#6c727e;text-align:center;line-height:19px">Copy</div>
<div class="abs" style="left:32.5px;top:155.0px;width:0;height:0;border-left:4.5px solid transparent;border-right:4.5px solid transparent;border-top:7.5px solid #4f76a0"></div>
<div class="json" style="left:48px;top:147.5px"><span class="m">(root) <span style="position:relative;left:3px">{}</span>  14 keys</span></div>
<div class="abs" style="left:58.5px;top:174.02px;width:0;height:0;border-top:4.5px solid transparent;border-bottom:4.5px solid transparent;border-left:7.5px solid #4f76a0"></div>
<div class="json" style="left:73px;top:169.02px"><span class="k">"working"</span>: <span class="m"><span style="position:relative;left:3px">{}</span>  1 key</span></div>
<div class="abs" style="left:58.5px;top:195.54000000000002px;width:0;height:0;border-top:4.5px solid transparent;border-bottom:4.5px solid transparent;border-left:7.5px solid #4f76a0"></div>
<div class="json" style="left:73px;top:190.54000000000002px"><span class="k">"globals"</span>: <span class="m"><span style="position:relative;left:3px">{}</span>  2 keys</span></div>
<div class="json" style="left:59px;top:212.06px"><span class="k">"applicationName"</span>: <span class="s">"Kanarra Digital"</span></div>
<div class="json" style="left:59px;top:233.57999999999998px"><span class="k">"flowName"</span>: <span class="s">"Endpoint POST /maintenance-intervals"</span></div>
<div class="json" style="left:59px;top:255.10000000000002px"><span class="k">"flowId"</span>: <span class="s">"5d432dd874a2f00006aa7892"</span></div>
<div class="json" style="left:59px;top:276.62px"><span class="k">"flowVersion"</span>: <span class="s">"develop"</span></div>
<div class="json" style="left:59px;top:298.14px"><span class="k">"relayType"</span>: <span class="s">"experienceUser"</span></div>
<div class="json" style="left:59px;top:319.65999999999997px"><span class="k">"relayId"</span>: <span class="s">"5d4316bedd07a9000647c0df"</span></div>
<div class="abs" style="left:58.5px;top:346.18px;width:0;height:0;border-top:4.5px solid transparent;border-bottom:4.5px solid transparent;border-left:7.5px solid #4f76a0"></div>
<div class="json" style="left:73px;top:341.18px"><span class="k">"experience"</span>: <span class="m"><span style="position:relative;left:3px">{}</span>  3 keys</span></div>
<div class="json" style="left:59px;top:362.7px"><span class="k">"triggerType"</span>: <span class="s">"endpoint"</span></div>
<div class="json" style="left:59px;top:384.22px"><span class="k">"triggerId"</span>: <span class="s">"5d432dd5dd07a9000647c0e9"</span></div>
<div class="json" style="left:59px;top:405.74px"><span class="k">"applicationId"</span>: <span class="s">"5cf96318afabc800087c6161"</span></div>
<div class="abs" style="left:57.5px;top:434.76px;width:0;height:0;border-left:4.5px solid transparent;border-right:4.5px solid transparent;border-top:7.5px solid #4f76a0"></div>
<div class="json" style="left:73px;top:427.26px"><span class="k">"data"</span>: <span class="m"><span style="position:relative;left:3px">{}</span>  8 keys</span></div>
<div class="json" style="left:84px;top:448.78px"><span class="k">"replyId"</span>: <span class="s">"5d432dd5dd07a9000647c0e9.bU5VyhRnxt"</span></div>
<div class="abs" style="left:83.5px;top:475.29999999999995px;width:0;height:0;border-top:4.5px solid transparent;border-bottom:4.5px solid transparent;border-left:7.5px solid #4f76a0"></div>
<div class="json" style="left:98px;top:470.29999999999995px"><span class="k">"cookies"</span>: <span class="m"><span style="position:relative;left:3px">{}</span>  2 keys</span></div>
<div class="abs" style="left:82.5px;top:499.31999999999994px;width:0;height:0;border-left:4.5px solid transparent;border-right:4.5px solid transparent;border-top:7.5px solid #4f76a0"></div>
<div class="json" style="left:98px;top:491.81999999999994px"><span class="k">"body"</span>: <span class="m"><span style="position:relative;left:3px">{}</span>  1 key</span></div>
<div class="json" style="left:109px;top:513.3399999999999px"><span class="k">"maintenanceIntervals"</span>: <span class="s">"id,index,service_s</span></div>
<div class="json" style="left:84px;top:534.86px"><span class="k">"query"</span>: <span class="m"><span style="position:relative;left:3px">{}</span>  0 keys</span></div>
<div class="abs" style="left:83.5px;top:561.38px;width:0;height:0;border-top:4.5px solid transparent;border-bottom:4.5px solid transparent;border-left:7.5px solid #4f76a0"></div>
<div class="json" style="left:98px;top:556.38px"><span class="k">"headers"</span>: <span class="m"><span style="position:relative;left:3px">{}</span>  13 keys</span></div>
<div class="json" style="left:84px;top:577.9px"><span class="k">"method"</span>: <span class="s">"post"</span></div>
<div class="json" style="left:84px;top:599.4200000000001px"><span class="k">"params"</span>: <span class="m"><span style="position:relative;left:3px">{}</span>  0 keys</span></div>
<div class="json" style="left:84px;top:620.94px"><span class="k">"path"</span>: <span class="s">"/maintenance-intervals"</span></div>
<div class="json" style="left:59px;top:642.46px"><span class="k">"time"</span>: <span class="t">Sat Aug 3, 2019 13:48:53 GMT-04:00</span></div>
<div class="abs" style="left:437px;top:217px;width:9px;height:330px;background:#fff"></div>
<div class="abs" style="left:105px;top:509px;width:340px;height:27px;border:2px solid #e8141c"></div>
</div>
<div id="rsb">
<svg class="abs" style="left:7.0px;top:46.0px" width="16" height="16" viewBox="0 0 16 16"><rect x="6.6" y="0.8" width="2.8" height="3.5" fill="#6b7079" transform="rotate(0 8 8)"/><rect x="6.6" y="0.8" width="2.8" height="3.5" fill="#6b7079" transform="rotate(45 8 8)"/><rect x="6.6" y="0.8" width="2.8" height="3.5" fill="#6b7079" transform="rotate(90 8 8)"/><rect x="6.6" y="0.8" width="2.8" height="3.5" fill="#6b7079" transform="rotate(135 8 8)"/><rect x="6.6" y="0.8" width="2.8" height="3.5" fill="#6b7079" transform="rotate(180 8 8)"/><rect x="6.6" y="0.8" width="2.8" height="3.5" fill="#6b7079" transform="rotate(225 8 8)"/><rect x="6.6" y="0.8" width="2.8" height="3.5" fill="#6b7079" transform="rotate(270 8 8)"/><rect x="6.6" y="0.8" width="2.8" height="3.5" fill="#6b7079" transform="rotate(315 8 8)"/><circle cx="8" cy="8" r="5.2" fill="#6b7079"/><circle cx="8" cy="8" r="2" fill="#f3f4f6"/></svg>
<svg class="abs" style="left:7.0px;top:86.5px" width="16" height="16" viewBox="0 0 16 16"><circle cx="4.5" cy="2.5" r="1.5" stroke="#6b7079" stroke-width="1.2" fill="none"/><circle cx="4.5" cy="13.5" r="1.5" stroke="#6b7079" stroke-width="1.2" fill="none"/><circle cx="12" cy="4" r="1.5" stroke="#6b7079" stroke-width="1.2" fill="none"/><path d="M4.5 4 V12 M12 5.5 C12 9 4.5 8.5 4.5 12" stroke="#6b7079" stroke-width="1.3" fill="none"/></svg>
<svg class="abs" style="left:7.0px;top:128.0px" width="16" height="16" viewBox="0 0 16 16"><ellipse cx="8" cy="3.5" rx="6" ry="2.3" fill="#6b7079"/><path d="M2 5.5 Q8 9 14 5.5 V7.5 Q8 11 2 7.5 Z M2 9 Q8 12.5 14 9 V11 Q8 14.5 2 11 Z M2 12.5 Q8 16 14 12.5 V13 Q8 16.5 2 13 Z" fill="#6b7079"/></svg>
<div class="abs" style="left:0;top:161px;width:31px;height:32px;background:#fff;border:1px solid #e3e5e8;border-left:none"></div>
<svg class="abs" style="left:7.5px;top:169.5px" width="15" height="15" viewBox="0 0 16 16"><path d="M5.6 3.2 L4.6 1.2 M10.4 3.2 L11.4 1.2" stroke="#111" stroke-width="1.3" stroke-linecap="round"/><rect x="3.6" y="2.6" width="8.8" height="12.6" rx="4.4" fill="#111"/><path d="M2 6.3 H4 M12 6.3 H14 M1.8 9.3 H4 M12 9.3 H14.2 M2 12.3 H4 M12 12.3 H14" stroke="#111" stroke-width="1.9" stroke-linecap="round"/><path d="M6.3 8 H9.7 M6.3 10.8 H9.7" stroke="#fff" stroke-width="1.2"/></svg>
<div class="abs" style="left:0;top:202px;width:35px;height:1px;background:#e3e5e8"></div>
<svg class="abs" style="left:7.0px;top:221.0px" width="16" height="16" viewBox="0 0 16 16"><circle cx="8" cy="8" r="7" fill="#6b7079"/><path d="M3 4 C5 4 6 6 5 7.5 C4 9 6 10 6.5 12 L5 14 M9 2 C9 4 11 4 12 5 C13 6 11 7.5 12 9 C13 10 13.5 11 14 10" stroke="#f3f4f6" stroke-width="1.3" fill="none"/></svg>
</div>
<div class="abs" style="z-index:5;left:11px;top:19px;width:25px;height:25px;border-radius:50%;background:#3b3bf5;color:#fff;font-size:11px;font-weight:700;text-align:center;line-height:25px;letter-spacing:0.2px">KD</div>
<div class="abs" style="z-index:6;left:34px;top:48px;width:29px;height:29px;border-radius:50%;background:#fff;box-shadow:0 1px 4px rgba(0,0,0,.18)"></div>
<svg class="abs" style="z-index:7;left:41px;top:56px" width="16" height="12" viewBox="0 0 16 12"><path d="M1 1.5 H15 M1 5.8 H15 M1 10 H15" stroke="#4b5161" stroke-width="1.6"/></svg>

</body></html>
